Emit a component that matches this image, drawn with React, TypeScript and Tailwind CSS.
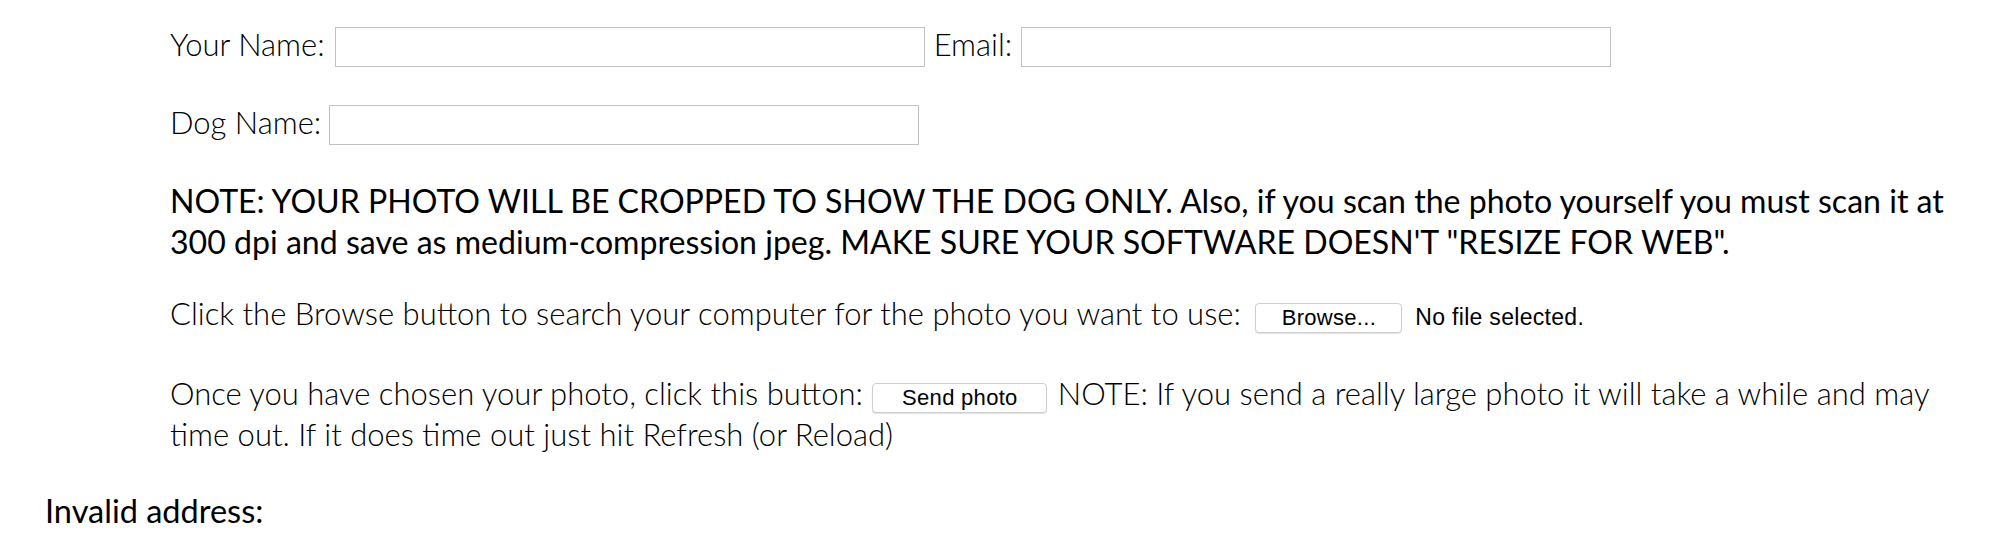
export default function App() {
  const inputCls = 'h-[40px] w-[590px] border border-[#c2c2c2] bg-white shrink-0';
  const btnCls =
    'inline-block h-[30px] rounded-[4px] border border-[#cfcfcf] bg-white text-[22px] leading-[28px] tracking-[0.3px] text-black shadow-[0_1px_1px_rgba(0,0,0,0.12)] align-baseline font-["Liberation_Sans",Arial,sans-serif]';

  return (
    <div className="min-h-[548px] bg-white px-[45px] pt-[24px] text-black font-['Lato','Noto_Sans',sans-serif] text-[31px] leading-[41px]">
      <div className="pl-[125px] font-light">
        {/* Name / email row */}
        <div className="flex items-center">
          <span className="pb-[5px] pr-[10px]">Your Name:</span>
          <input type="text" className={inputCls} />
          <span className="pb-[5px] pl-[9px] pr-[9px]">Email:</span>
          <input type="text" className={inputCls} />
        </div>

        {/* Dog name row */}
        <div className="mt-[32px] flex items-center">
          <span className="pb-[5px] pr-[8px]">Dog Name:</span>
          <input type="text" className={inputCls} />
        </div>

        <p className="mt-[32px] text-[32.1px] font-normal">
          NOTE: YOUR PHOTO WILL BE CROPPED TO SHOW THE DOG ONLY. Also, if you scan the photo yourself you must
          scan it at 300 dpi and save as medium-compression jpeg. MAKE SURE YOUR SOFTWARE DOESN'T "RESIZE FOR
          WEB".
        </p>

        <p className="mt-[31px]">
          Click the Browse button to search your computer for the photo you want to use:{' '}
          <button className={`${btnCls} ml-[6px] w-[147px]`}>Browse...</button>
          <span className="ml-[13px] text-[23px] tracking-[0.3px] font-['Liberation_Sans',Arial,sans-serif]">
            No file selected.
          </span>
        </p>

        <p className="mt-[35px]">
          Once you have chosen your photo, click this button:{' '}
          <button className={`${btnCls} ml-[1px] mr-[2px] w-[175px]`}>Send photo</button> NOTE: If you send a
          really large photo it will take a while and may time out. If it does time out just hit Refresh (or
          Reload)
        </p>
      </div>

      <p className="mt-[35px] text-[32.5px]">Invalid address:</p>
    </div>
  );
}
